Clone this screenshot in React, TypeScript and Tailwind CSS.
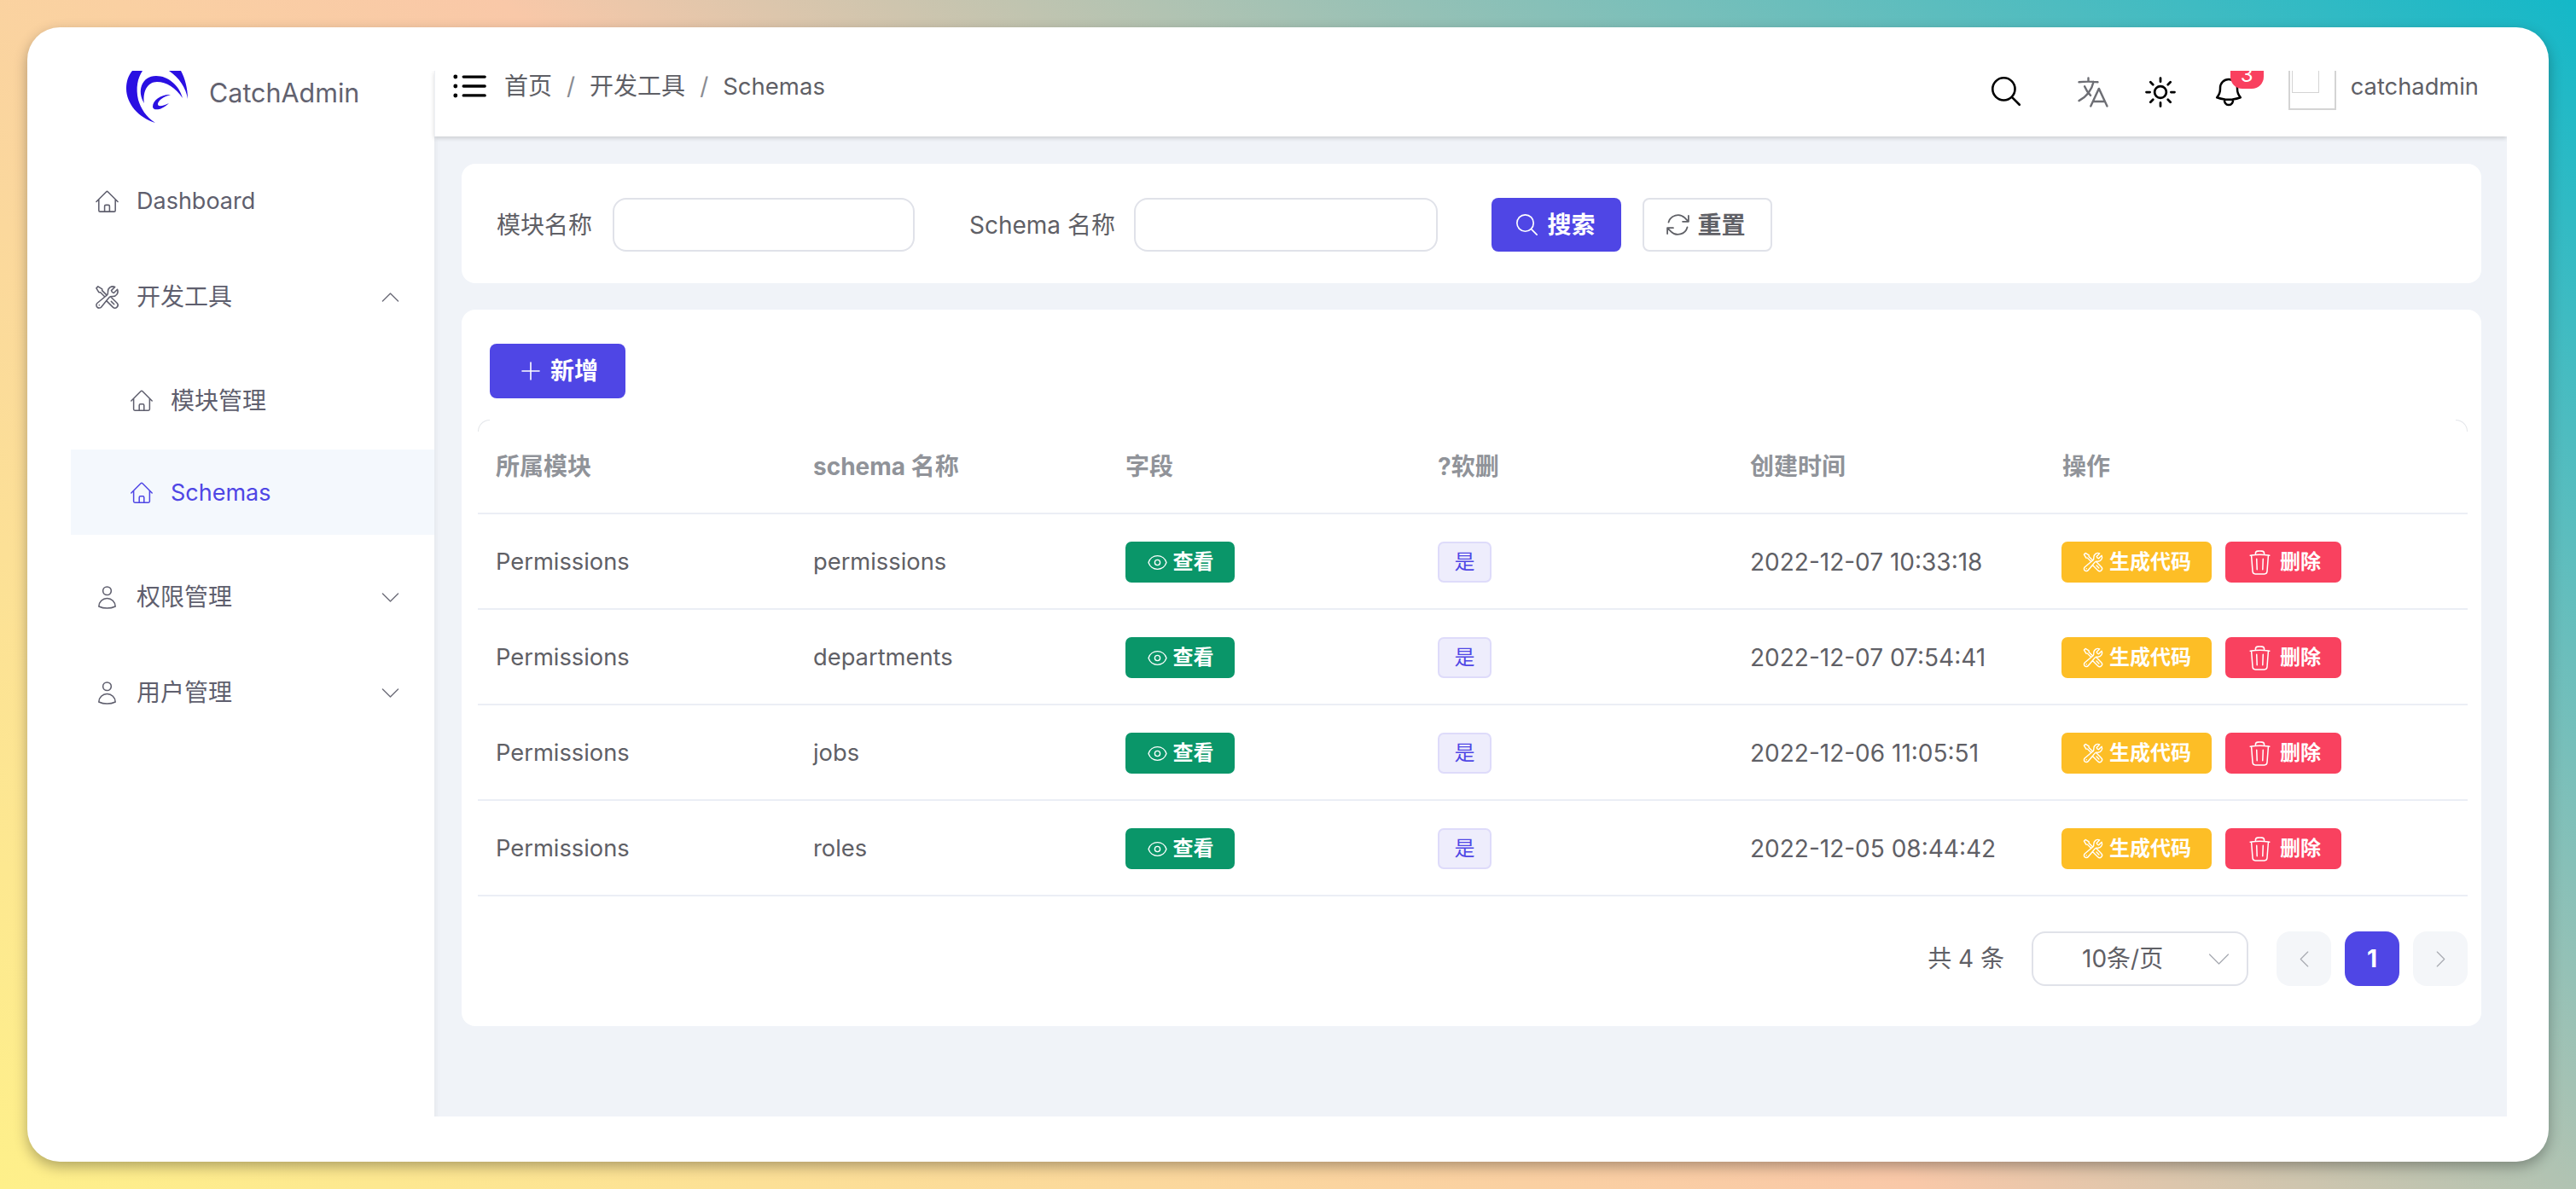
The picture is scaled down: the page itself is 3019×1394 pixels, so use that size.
import React from 'react';
import {
  HiOutlineArrowPath,
  HiOutlineBell,
  HiOutlineChevronDown,
  HiOutlineChevronLeft,
  HiOutlineChevronRight,
  HiOutlineChevronUp,
  HiOutlineEye,
  HiOutlineHome,
  HiOutlineLanguage,
  HiOutlineListBullet,
  HiOutlineMagnifyingGlass,
  HiOutlinePlus,
  HiOutlineSun,
  HiOutlineTrash,
  HiOutlineUser,
  HiOutlineWrenchScrewdriver,
} from 'react-icons/hi2';

const rows = [
  { module: 'Permissions', schema: 'permissions', time: '2022-12-07 10:33:18' },
  { module: 'Permissions', schema: 'departments', time: '2022-12-07 07:54:41' },
  { module: 'Permissions', schema: 'jobs', time: '2022-12-06 11:05:51' },
  { module: 'Permissions', schema: 'roles', time: '2022-12-05 08:44:42' },
];

const columns = 'grid grid-cols-[372px_366px_366px_366px_366px_1fr]';

const Logo = () => (
  <svg width="72" height="61" viewBox="0 0 72 61" fill="#2a10e2" className="shrink-0">
    <path d="M7 0C2 6 0 13 0 21C0 38 14 55 34 61C23 54 17 44 14 34C11 20 13 9 19 0Z" />
    <path d="M21 38C12 24 18 6 35 6C49 6 62 17 66 32C58 20 47 13 36 13C25 13 19 24 21 38Z" />
    <path d="M50 0H64C69 9 72 21 72 33C70 20 62 8 50 0Z" />
    <path d="M52 28C42 27 31 34 31 42C31 47 41 47 50 38C44 41 37 43 37 39C37 35 44 30 52 28Z" />
  </svg>
);

const MenuItem = ({
  icon,
  label,
  chevron,
  active,
  sub,
  nudge,
  latin,
}: {
  icon: React.ReactNode;
  label: string;
  chevron?: 'up' | 'down';
  active?: boolean;
  sub?: boolean;
  nudge?: boolean;
  latin?: boolean;
}) => (
  <div
    className={`flex h-[100px] items-center pr-[37px] ${latin ? 'text-[27px]' : 'text-[28px]'} ${
      sub ? 'pl-[67px]' : 'pl-[27px]'
    } ${nudge ? 'pt-[2px]' : ''} ${active ? 'bg-[#f4f8fd] text-[#4f46e5]' : 'text-[#5f5f6e]'}`}
  >
    <span className="mr-[19px] flex w-[31px] justify-center">{icon}</span>
    <span className="flex-1">{label}</span>
    {chevron === 'up' && <HiOutlineChevronUp className="h-[29px] w-[29px] text-[#70707c]" strokeWidth={1.2} />}
    {chevron === 'down' && <HiOutlineChevronDown className="h-[29px] w-[29px] text-[#70707c]" strokeWidth={1.2} />}
  </div>
);

const Sidebar = () => (
  <aside className="z-10 flex w-[426px] shrink-0 flex-col bg-white">
    <div className="flex h-[103px] items-start pl-[65px]">
      <Logo />
      <span className="ml-[25px] mt-[9px] text-[30.5px] leading-[34px] text-[#62626f]">CatchAdmin</span>
    </div>
    <MenuItem latin icon={<HiOutlineHome className="h-[31px] w-[31px]" strokeWidth={1.2} />} label="Dashboard" />
    <div className="mt-[12px]">
      <MenuItem icon={<HiOutlineWrenchScrewdriver className="h-[31px] w-[31px]" strokeWidth={1.2} />} label="开发工具" chevron="up" />
    </div>
    <div className="mt-[21px] flex flex-col gap-[8px]">
      <MenuItem sub nudge icon={<HiOutlineHome className="h-[30px] w-[30px]" strokeWidth={1.2} />} label="模块管理" />
      <MenuItem sub nudge latin active icon={<HiOutlineHome className="h-[30px] w-[30px]" strokeWidth={1.2} />} label="Schemas" />
    </div>
    <div className="mt-[22px] flex flex-col gap-[12px]">
      <MenuItem nudge icon={<HiOutlineUser className="h-[31px] w-[31px]" strokeWidth={1.2} />} label="权限管理" chevron="down" />
      <MenuItem nudge icon={<HiOutlineUser className="h-[31px] w-[31px]" strokeWidth={1.2} />} label="用户管理" chevron="down" />
    </div>
  </aside>
);

const Header = () => (
  <header className="relative z-10 flex h-[77px] shrink-0 items-start border-l border-[#eef0f4] bg-white pl-[16px] pr-[33px] shadow-[0_2px_5px_rgba(0,0,0,0.16)]">
    <HiOutlineListBullet className="mt-[-7px] h-[50px] w-[50px] text-black" strokeWidth={1.6} />
    <nav className="ml-[15px] flex items-center text-[28px] leading-[36px] text-[#5f6066]">
      <span>首页</span>
      <span className="mx-[17px] text-[#8a8c92]">/</span>
      <span>开发工具</span>
      <span className="mx-[17px] text-[#8a8c92]">/</span>
      <span className="text-[27.5px]">Schemas</span>
    </nav>
    <div className="ml-auto flex items-start">
      <HiOutlineMagnifyingGlass className="mt-[3px] h-[42px] w-[42px] text-black" />
      <HiOutlineLanguage className="ml-[59px] mt-[3px] h-[44px] w-[44px] text-[#6d6e74]" strokeWidth={1.3} />
      <HiOutlineSun className="ml-[35px] mt-[3px] h-[44px] w-[44px] text-black" />
      <div className="relative ml-[38px] mt-[5px]">
        <HiOutlineBell className="h-[40px] w-[40px] text-black" />
        <div className="absolute left-[22px] top-[-24px] flex h-[40px] w-[39px] items-center justify-center rounded-[14px] bg-[#f9405f] pt-[8px] text-[24px] leading-none text-white">
          3
        </div>
      </div>
      <div className="ml-[50px] flex h-[46px] w-[56px] items-start border-x-2 border-b-2 border-[#d4d4d4] pl-[2px]">
        <div className="h-[26px] w-[32px] border-x border-b border-[#d4d4d4]" />
      </div>
      <span className="ml-[17px] text-[27.3px] leading-[38px] text-[#5f6066]">catchadmin</span>
    </div>
  </header>
);

const TextInput = ({ className }: { className: string }) => (
  <div className={`h-[63px] rounded-[16px] border-2 border-[#e0e2e9] bg-white ${className}`} />
);

const FilterCard = () => (
  <section className="flex h-[140px] items-center rounded-[16px] bg-white pl-[41px] pt-[3px] text-[28px] text-[#5f6066]">
    <span className="w-[136px]">模块名称</span>
    <TextInput className="w-[354px]" />
    <span className="ml-[64px] w-[193px]">Schema 名称</span>
    <TextInput className="w-[356px]" />
    <button className="ml-[63px] flex h-[63px] w-[152px] items-center justify-center gap-[8px] rounded-[8px] bg-[#4f46e5] pr-[4px] font-bold text-white">
      <HiOutlineMagnifyingGlass className="h-[31px] w-[31px]" strokeWidth={1.3} />
      搜索
    </button>
    <button className="ml-[25px] flex h-[63px] w-[152px] items-center justify-center gap-[6px] rounded-[8px] border-2 border-[#e0e2e9] bg-white pr-[6px] font-bold text-[#5f6066]">
      <HiOutlineArrowPath className="h-[33px] w-[33px]" strokeWidth={1.3} />
      重置
    </button>
  </section>
);

const Tag = ({ className, children }: { className: string; children: React.ReactNode }) => (
  <span className={`flex h-[48px] items-center justify-center rounded-[7px] text-[24px] font-bold text-white ${className}`}>
    {children}
  </span>
);

const TableRow = ({ module, schema, time }: { module: string; schema: string; time: string }) => (
  <div className={`${columns} h-[112px] items-center border-b-2 border-[#ebeef5] pt-[2px] text-[27.3px] text-[#5f6066]`}>
    <div className="pl-[21px]">{module}</div>
    <div className="pl-[21px]">{schema}</div>
    <div className="pl-[21px]">
      <Tag className="w-[128px] gap-[6px] bg-[#0a9669]">
        <HiOutlineEye className="h-[25px] w-[25px]" strokeWidth={1.3} />
        查看
      </Tag>
    </div>
    <div className="pl-[21px]">
      <span className="flex h-[48px] w-[63px] items-center justify-center rounded-[7px] border-2 border-[#dedbfa] bg-[#eeedfc] text-[24px] text-[#4f46e5]">
        是
      </span>
    </div>
    <div className="pl-[21px] text-[28px]">{time}</div>
    <div className="flex gap-[16px] pl-[20px]">
      <Tag className="w-[176px] gap-[6px] bg-[#fdbe26]">
        <HiOutlineWrenchScrewdriver className="h-[26px] w-[26px]" strokeWidth={1.3} />
        生成代码
      </Tag>
      <Tag className="w-[136px] gap-[7px] bg-[#f9415f]">
        <HiOutlineTrash className="h-[33px] w-[33px]" strokeWidth={1.1} />
        删除
      </Tag>
    </div>
  </div>
);

const Pagination = () => (
  <div className="mt-[41px] flex items-center justify-end text-[28px] text-[#5f6066]">
    <span>共 4 条</span>
    <div className="ml-[32px] flex h-[64px] w-[254px] items-center rounded-[16px] border-2 border-[#e0e2e9] pl-[57px] pr-[15px]">
      <span className="flex-1">10条/页</span>
      <HiOutlineChevronDown className="h-[35px] w-[35px] text-[#a8abb2]" strokeWidth={0.9} />
    </div>
    <button className="ml-[33px] flex h-[64px] w-[64px] items-center justify-center rounded-[16px] bg-[#f4f6f9] text-[#a8abb2]">
      <HiOutlineChevronLeft className="h-[27px] w-[27px]" strokeWidth={1.1} />
    </button>
    <button className="ml-[16px] flex h-[64px] w-[64px] items-center justify-center rounded-[16px] bg-[#4f46e5] font-bold text-white">
      1
    </button>
    <button className="ml-[16px] flex h-[64px] w-[64px] items-center justify-center rounded-[16px] bg-[#f4f6f9] text-[#a8abb2]">
      <HiOutlineChevronRight className="h-[27px] w-[27px]" strokeWidth={1.1} />
    </button>
  </div>
);

const TableCard = () => (
  <section className="mt-[31px] h-[840px] rounded-[16px] bg-white pl-[19px] pr-[16px] pt-[40px]">
    <button className="ml-[14px] flex h-[64px] w-[159px] items-center justify-center gap-[7px] rounded-[8px] bg-[#4f46e5] text-[28px] font-bold text-white">
      <HiOutlinePlus className="h-[32px] w-[32px]" strokeWidth={1.2} />
      新增
    </button>
    {/* only the two top corners of the table show a hairline */}
    <div className="mt-[25px] flex h-0 justify-between">
      <div className="h-[14px] w-[14px] rounded-tl-[14px] border-l border-t border-[#e4e6ea]" />
      <div className="h-[14px] w-[14px] rounded-tr-[14px] border-r border-t border-[#e4e6ea]" />
    </div>
    <div className={`${columns} h-[111px] items-center border-b-2 border-[#ebeef5] text-[28px] font-bold text-[#909399]`}>
      {['所属模块', 'schema 名称', '字段', '?软删', '创建时间', '操作'].map((title) => (
        <div key={title} className="pl-[21px]">
          {title}
        </div>
      ))}
    </div>
    {rows.map((row) => (
      <TableRow key={row.schema} {...row} />
    ))}
    <Pagination />
  </section>
);

export default function App() {
  return (
    <div className="h-screen w-screen bg-[linear-gradient(40deg,#fef08a_0%,#f9c8a8_48%,#14b8c8_100%)] p-[32px] [font-family:Inter,'Noto_Sans_CJK_SC',sans-serif]">
      <div className="h-full overflow-hidden rounded-[38px] bg-white pb-[53px] pl-[51px] pr-[49px] pt-[51px] shadow-[0_6px_16px_rgba(0,0,0,0.3)]">
        <div className="flex h-full overflow-hidden">
          <Sidebar />
          <main className="flex min-w-0 flex-1 flex-col bg-[#f0f3f8] shadow-[inset_8px_0_6px_-6px_rgba(0,0,0,0.05)]">
            <Header />
            <div className="pl-[32px] pr-[30px] pt-[32px]">
              <FilterCard />
              <TableCard />
            </div>
          </main>
        </div>
      </div>
    </div>
  );
}
